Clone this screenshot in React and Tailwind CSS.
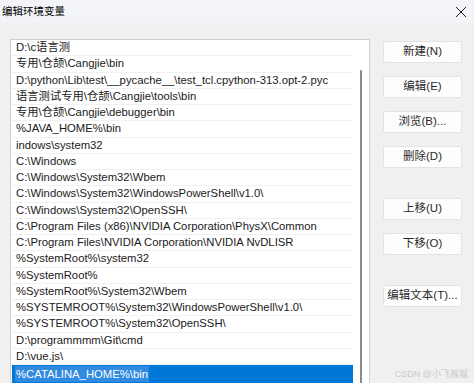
import React from 'react';

const rows = [
  'D:\\c语言测',
  '专用\\仓颉\\Cangjie\\bin',
  'D:\\python\\Lib\\test\\__pycache__\\test_tcl.cpython-313.opt-2.pyc',
  '语言测试专用\\仓颉\\Cangjie\\tools\\bin',
  '专用\\仓颉\\Cangjie\\debugger\\bin',
  '%JAVA_HOME%\\bin',
  'indows\\system32',
  'C:\\Windows',
  'C:\\Windows\\System32\\Wbem',
  'C:\\Windows\\System32\\WindowsPowerShell\\v1.0\\',
  'C:\\Windows\\System32\\OpenSSH\\',
  'C:\\Program Files (x86)\\NVIDIA Corporation\\PhysX\\Common',
  'C:\\Program Files\\NVIDIA Corporation\\NVIDIA NvDLISR',
  '%SystemRoot%\\system32',
  '%SystemRoot%',
  '%SystemRoot%\\System32\\Wbem',
  '%SYSTEMROOT%\\System32\\WindowsPowerShell\\v1.0\\',
  '%SYSTEMROOT%\\System32\\OpenSSH\\',
  'D:\\programmmm\\Git\\cmd',
  'D:\\vue.js\\',
];

const groups = [
  ['新建(N)', '编辑(E)', '浏览(B)...', '删除(D)'],
  ['上移(U)', '下移(O)'],
  ['编辑文本(T)...'],
];

function DialogButton({ label }) {
  return (
    <div className="h-[22px] w-[79px] flex items-center justify-center bg-[#fdfdfd] border border-[#e3e3e3] rounded-[2px] text-[11.5px] text-[#2a2a2a]">
      {label}
    </div>
  );
}

export default function App() {
  return (
    <div
      className="relative w-[474px] h-[383px] overflow-hidden bg-[#f0f0f0] flex flex-col"
      style={{ fontFamily: '"Liberation Sans", "Noto Sans CJK SC", sans-serif' }}
    >
      {/* title bar */}
      <div className="h-[23px] shrink-0 flex items-center justify-between bg-[#f2f4f7] pl-[2px] pr-[7px]">
        <span className="text-[10.5px] text-black leading-none">编辑环境变量</span>
        <svg width="12" height="12" viewBox="0 0 12 12" className="text-[#222]">
          <path d="M1 1 L11 11 M11 1 L1 11" stroke="currentColor" strokeWidth="1" fill="none" />
        </svg>
      </div>

      <div className="flex-1 flex pl-[10px] pt-[16px] min-h-0">
        {/* list box */}
        <div className="w-[360px] h-[400px] flex border border-[#cfcfcf] bg-white">
          <div className="flex-1 flex flex-col pl-[1px]">
            {rows.map((r, i) => (
              <div
                key={i}
                className="h-[16.25px] shrink-0 flex items-center pl-[4px] border-b border-[#f1f1f1] text-[11.3px] text-[#1a1a1a] whitespace-nowrap overflow-hidden"
              >
                {r}
              </div>
            ))}
            <div className="h-[18px] shrink-0 flex items-center pl-[3px] bg-[#0078d7]">
              <span className="h-[16px] flex items-center px-[1px] bg-[#2f8ae0] text-[11.3px] text-white whitespace-nowrap">
                %CATALINA_HOME%\bin
              </span>
            </div>
          </div>
          {/* scrollbar */}
          <div className="w-[16px] shrink-0 flex justify-center pt-[30px] bg-white">
            <div className="w-[2px] h-[360px] rounded-full bg-[#8a8a8a]" />
          </div>
        </div>

        {/* buttons */}
        <div className="ml-[13px] pt-[2px] flex flex-col gap-[30px]">
          {groups.map((g, gi) => (
            <div key={gi} className="flex flex-col gap-[13px]">
              {g.map((b) => (
                <DialogButton key={b} label={b} />
              ))}
            </div>
          ))}
        </div>
      </div>

      {/* watermark */}
      <div className="absolute right-[6px] bottom-[4px] text-[9px] text-[#c9c9c9] leading-none">
        CSDN @小飞猴猴
      </div>
    </div>
  );
}
